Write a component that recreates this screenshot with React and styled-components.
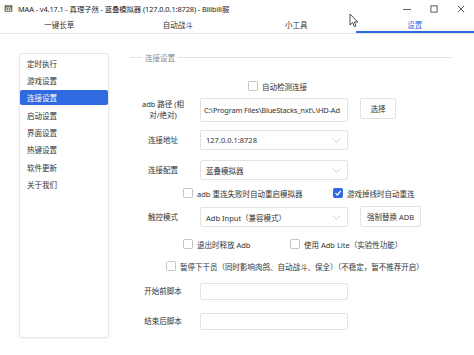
import React from 'react';
import styled, { createGlobalStyle } from 'styled-components';

const GlobalStyle = createGlobalStyle`
  html, body {
    margin: 0;
    padding: 0;
    background: #ffffff;
  }
  * {
    box-sizing: border-box;
  }
`;

const BLUE = '#2f6be0';

const Window = styled.div`
  position: relative;
  width: 474px;
  height: 355px;
  overflow: hidden;
  background: #ffffff;
  font-family: "Noto Sans", "Noto Sans CJK SC", sans-serif;
  font-size: 7.5px;
  color: #333333;
  display: flex;
  flex-direction: column;
`;

const TitleBar = styled.div`
  height: 17px;
  display: flex;
  align-items: center;
  padding-left: 4px;
  flex-shrink: 0;
`;

const TitleText = styled.div`
  margin-left: 5px;
  font-size: 7.4px;
  color: #222222;
  white-space: nowrap;
  letter-spacing: -0.1px;
`;

const Controls = styled.div`
  margin-left: auto;
  display: flex;
  align-items: center;
  height: 17px;
`;

const ControlButton = styled.div`
  width: 27px;
  height: 17px;
  display: flex;
  align-items: center;
  justify-content: center;
`;

const TabBar = styled.div`
  height: 17px;
  display: grid;
  grid-template-columns: repeat(4, 1fr);
  border-bottom: 1px solid #e6e6e6;
  flex-shrink: 0;
`;

const Tab = styled.div`
  display: flex;
  align-items: center;
  justify-content: center;
  color: ${p => (p.$active ? BLUE : '#333333')};
  border-bottom: 2px solid ${p => (p.$active ? BLUE : 'transparent')};
  font-size: 7.5px;
  padding-top: 1px;
`;

const Body = styled.div`
  flex: 1;
  display: flex;
  min-height: 0;
`;

const Sidebar = styled.div`
  margin: 19px 0 0 19px;
  width: 90px;
  height: 285px;
  border: 1px solid #e6e6e6;
  border-radius: 3px;
  box-shadow: 0 1px 2px rgba(0, 0, 0, 0.05);
  display: flex;
  flex-direction: column;
  gap: 2.4px;
  padding-top: 1.5px;
  flex-shrink: 0;
`;

const NavItem = styled.div`
  height: 15px;
  display: flex;
  align-items: center;
  padding-left: 7px;
  border-radius: 2px;
  background: ${p => (p.$active ? BLUE : 'transparent')};
  color: ${p => (p.$active ? '#ffffff' : '#333333')};
  font-size: 7.5px;
`;

const Content = styled.div`
  flex: 1;
  padding-left: 19px;
  display: flex;
  flex-direction: column;
  min-width: 0;
  overflow: hidden;
`;

const Legend = styled.div`
  margin-top: 18px;
  height: 10px;
  width: 324px;
  display: flex;
  align-items: center;
  gap: 3px;
  color: #8a8a8a;
  font-size: 7.5px;

  &::before {
    content: '';
    width: 12px;
    margin-left: 2px;
    border-top: 1px solid #e3e3e3;
  }
  &::after {
    content: '';
    flex: 1;
    border-top: 1px solid #e3e3e3;
  }
`;

const Row = styled.div`
  margin-top: ${p => p.$mt}px;
  height: ${p => p.$h}px;
  display: flex;
  align-items: center;
  padding-left: ${p => p.$indent || 0}px;
  white-space: nowrap;
`;

const Label = styled.div`
  width: 70px;
  margin-right: 2px;
  text-align: center;
  line-height: 11px;
  color: #333333;
  flex-shrink: 0;
  white-space: normal;
`;

const Field = styled.div`
  width: 148px;
  height: ${p => p.$h || 20}px;
  border: 1px solid #e3e3e3;
  border-radius: 2px;
  display: flex;
  align-items: center;
  padding: 0 ${p => (p.$tight ? 3 : 5)}px;
  letter-spacing: ${p => (p.$tight ? '-0.2px' : 'normal')};
  overflow: hidden;
  white-space: nowrap;
  color: #333333;
  flex-shrink: 0;
`;

const Chevron = styled.span`
  margin-left: auto;
  display: flex;
  align-items: center;
  margin-right: 1px;
`;

const Button = styled.div`
  margin-left: 12px;
  height: 21px;
  padding: 0 ${p => p.$pad || 8}px;
  border: 1px solid #e3e3e3;
  border-radius: 2px;
  display: flex;
  align-items: center;
  justify-content: center;
  min-width: ${p => p.$minw || 0}px;
  align-self: flex-start;
  flex-shrink: 0;
`;

const CheckItem = styled.div`
  display: flex;
  align-items: center;
  gap: 4px;
  width: ${p => (p.$w ? `${p.$w}px` : 'auto')};
  flex-shrink: 0;
`;

const Box = styled.span`
  width: 10px;
  height: 10px;
  border: 1px solid ${p => (p.$checked ? BLUE : '#c4c4c4')};
  background: ${p => (p.$checked ? BLUE : '#ffffff')};
  border-radius: 1.5px;
  display: inline-flex;
  align-items: center;
  justify-content: center;
  flex-shrink: 0;
`;

const Cursor = styled.svg`
  position: absolute;
  left: 349px;
  top: 13px;
`;

const AppIcon = () => (
  <svg width="9" height="9" viewBox="0 0 9 9">
    <rect x="0.5" y="1" width="8" height="7" rx="1" fill="#8d857b" />
    <path d="M1 1 L2.5 3 L1 4 Z M8 1 L6.5 3 L8 4 Z" fill="#5e5750" />
    <rect x="2" y="3.5" width="5" height="3.5" fill="#d8d2c8" />
    <circle cx="3.3" cy="5" r="0.7" fill="#3a3530" />
    <circle cx="5.7" cy="5" r="0.7" fill="#3a3530" />
  </svg>
);

const ChevronIcon = () => (
  <svg width="9" height="5" viewBox="0 0 9 5">
    <path d="M0.5 0.5 L4.5 4.3 L8.5 0.5" fill="none" stroke="#c8c8c8" strokeWidth="0.8" />
  </svg>
);

const Check = ({ checked, children, w }) => (
  <CheckItem $w={w}>
    <Box $checked={checked}>
      {checked && (
        <svg width="8" height="8" viewBox="0 0 8 8">
          <path d="M1.5 4.2 L3.3 6 L6.7 2" fill="none" stroke="#ffffff" strokeWidth="1.2" />
        </svg>
      )}
    </Box>
    <span>{children}</span>
  </CheckItem>
);

const navItems = ['定时执行', '游戏设置', '连接设置', '启动设置', '界面设置', '热键设置', '软件更新', '关于我们'];
const tabs = ['一键长草', '自动战斗', '小工具', '设置'];

export default function App() {
  return (
    <>
      <GlobalStyle />
      <Window>
        <TitleBar>
          <AppIcon />
          <TitleText>MAA - v4.17.1 - 真理子然 - 蓝叠模拟器 (127.0.0.1:8728) - Bilibili服</TitleText>
          <Controls>
            <ControlButton>
              <svg width="8" height="8" viewBox="0 0 8 8">
                <path d="M0 4.5 H8" stroke="#333" strokeWidth="0.8" />
              </svg>
            </ControlButton>
            <ControlButton>
              <svg width="8" height="8" viewBox="0 0 8 8">
                <rect x="0.9" y="0.9" width="6.2" height="6.2" fill="none" stroke="#333" strokeWidth="0.8" />
              </svg>
            </ControlButton>
            <ControlButton>
              <svg width="8" height="8" viewBox="0 0 8 8">
                <path d="M0.8 0.8 L7.2 7.2 M7.2 0.8 L0.8 7.2" stroke="#333" strokeWidth="0.8" />
              </svg>
            </ControlButton>
          </Controls>
        </TitleBar>

        <TabBar>
          {tabs.map((t, i) => (
            <Tab key={t} $active={i === 3}>{t}</Tab>
          ))}
        </TabBar>

        <Body>
          <Sidebar>
            {navItems.map((n, i) => (
              <NavItem key={n} $active={i === 2}>{n}</NavItem>
            ))}
          </Sidebar>

          <Content>
            <Legend>连接设置</Legend>

            <Row $mt={18} $h={12} $indent={120}>
              <Check>自动检测连接</Check>
            </Row>

            <Row $mt={6} $h={24}>
              <Label>adb 路径 (相<br />对/绝对)</Label>
              <Field $h={24} $tight>C:\Program Files\BlueStacks_nxt\.\HD-Ad</Field>
              <Button $minw={36}>选择</Button>
            </Row>

            <Row $mt={8} $h={20}>
              <Label>连接地址</Label>
              <Field>
                127.0.0.1:8728
                <Chevron><ChevronIcon /></Chevron>
              </Field>
            </Row>

            <Row $mt={10} $h={20}>
              <Label>连接配置</Label>
              <Field>
                蓝叠模拟器
                <Chevron><ChevronIcon /></Chevron>
              </Field>
            </Row>

            <Row $mt={7} $h={12} $indent={55}>
              <Check w={150}>adb 重连失败时自动重启模拟器</Check>
              <Check checked>游戏掉线时自动重连</Check>
            </Row>

            <Row $mt={7} $h={22}>
              <Label>触控模式</Label>
              <Field>
                Adb Input（兼容模式）
                <Chevron><ChevronIcon /></Chevron>
              </Field>
              <Button $pad={6}>强制替换 ADB</Button>
            </Row>

            <Row $mt={10} $h={12} $indent={55}>
              <Check w={107}>退出时释放 Adb</Check>
              <Check>使用 Adb Lite（实验性功能）</Check>
            </Row>

            <Row $mt={10} $h={12} $indent={38}>
              <Check>暂停下干员（同时影响肉鸽、自动战斗、保全）（不稳定，暂不推荐开启）</Check>
            </Row>

            <Row $mt={11} $h={17}>
              <Label>开始前脚本</Label>
              <Field $h={17} />
            </Row>

            <Row $mt={13} $h={17}>
              <Label>结束后脚本</Label>
              <Field $h={17} />
            </Row>
          </Content>
        </Body>

        <Cursor width="10" height="15" viewBox="0 0 10 15">
          <path d="M1 1 L1 12 L3.6 9.6 L5.4 13.6 L7 12.9 L5.3 9 L8.8 9 Z" fill="#ffffff" stroke="#222" strokeWidth="0.8" strokeLinejoin="round" />
        </Cursor>
      </Window>
    </>
  );
}
